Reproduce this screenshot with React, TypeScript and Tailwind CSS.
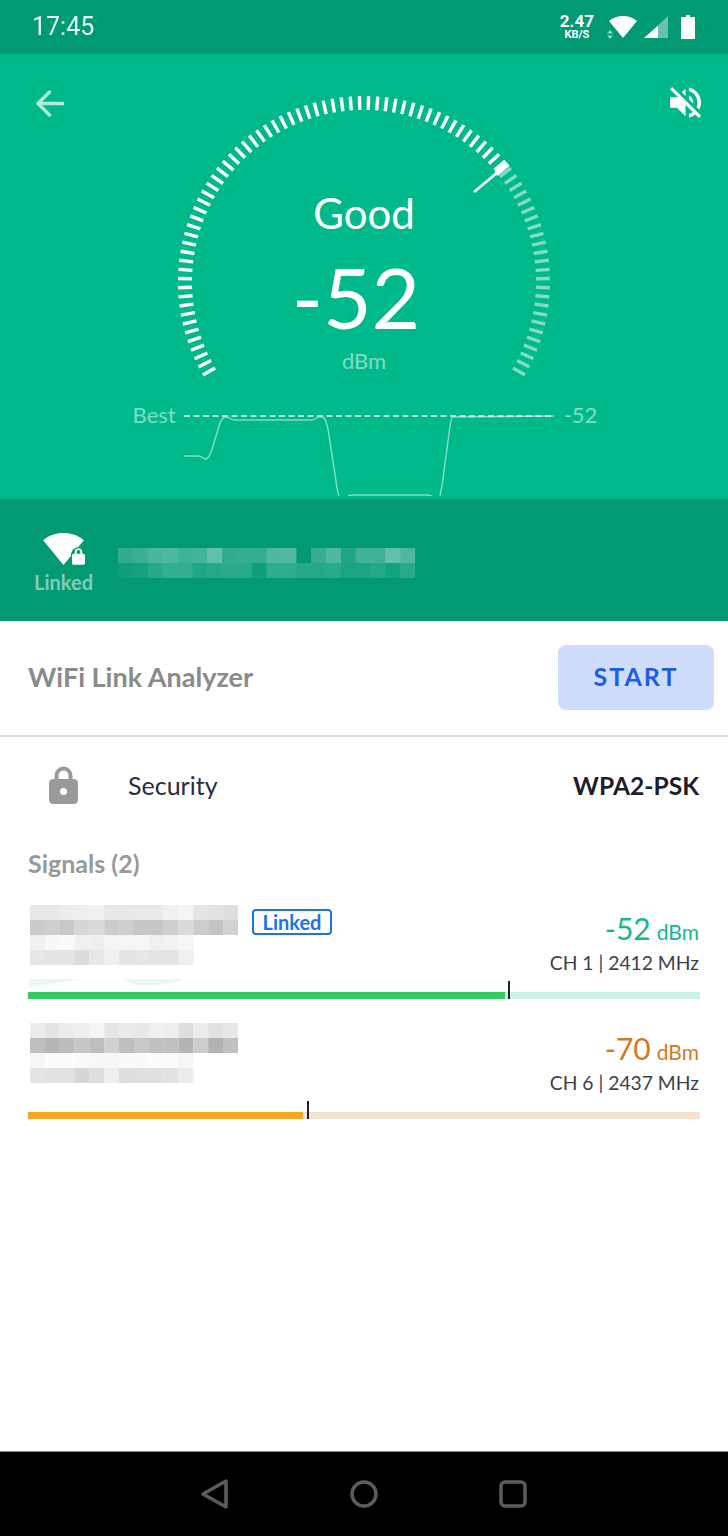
import React from 'react'

const ticks = Array.from({ length: 86 }, (_, i) => -120 + (i * 240) / 85)

const Gauge: React.FC = () => {
  const cx = 364
  const cy = 282
  return (
    <svg className="absolute left-[174px] top-[36px] w-[380px] h-[300px]" viewBox="174 90 380 300">
      {ticks.map((a, i) => {
        const r = (a * Math.PI) / 180
        const s = Math.sin(r)
        const c = Math.cos(r)
        return (
          <line
            key={i}
            x1={cx + 172 * s}
            y1={cy - 172 * c}
            x2={cx + 186 * s}
            y2={cy - 186 * c}
            stroke="#fff"
            strokeOpacity={a > 51 ? 0.5 : 1}
            strokeWidth={3.4}
          />
        )
      })}
      <line x1="474" y1="192" x2="498" y2="172" stroke="#fff" strokeWidth="2.5" />
      <line x1="496" y1="174" x2="508" y2="164" stroke="#fff" strokeWidth="5" />
    </svg>
  )
}

const Chart: React.FC = () => (
  <svg className="w-[372px] h-[85px] mt-[9px] shrink-0" viewBox="183 410 372 85">
    <path
      d="M183 455 L197 455 C201 455 203 458 205 458 C208 458 210 452 212 445 L219 422 C221 417 223 416 225 416 C228 416 230 419 234 419 L311 419 C314 419 315 416 318 416 L321 416 C324 416 325 420 327 428 L335 480 C336 488 337 492 338 495 M347 495 C348 494 350 494 353 494 L425 494 C428 494 429 494 431 495 M439 495 C441 486 442 480 443 470 L449 425 C450 418 451 416 452 416 L553 415"
      fill="none"
      stroke="#fff"
      strokeOpacity="0.5"
      strokeWidth="1.5"
    />
    <line x1="183" y1="415" x2="553" y2="415" stroke="#fff" strokeOpacity="0.9" strokeWidth="1.5" strokeDasharray="6 3.5" />
  </svg>
)

const WifiWedge: React.FC<{ className: string }> = ({ className }) => (
  <svg className={className} viewBox="0 0 42 33" fill="#fff">
    <path d="M0 7.5 C6 2.5 13 0 21 0 C29 0 36 2.5 42 7.5 L21 33 Z" />
  </svg>
)

// censored text in the picture, one grey value per block
const Pixels: React.FC<{ rows: string[][]; className: string; w: number; h: number }> = ({ rows, className, w, h }) => (
  <svg className={className} viewBox={`0 0 ${w} ${h}`}>
    {rows.map((row, y) =>
      row.map((fill, x) =>
        fill ? <rect key={`${x}-${y}`} x={x * 14.85} y={y * 15} width={15} height={15} fill={fill} /> : null,
      ),
    )}
  </svg>
)

const toWhite = (list: number[]) => list.map((v) => (v ? `rgba(255,255,255,${v})` : ''))
const toGrey = (list: number[]) => list.map((v) => (v ? `rgb(${v},${v},${v + 2})` : ''))

const linkedName = [
  toWhite([0.18, 0.22, 0.28, 0.3, 0.24, 0.26, 0.38, 0.18, 0.2, 0.2, 0.3, 0.32, 0, 0.2, 0.3, 0.12, 0.25, 0.25, 0.38, 0.3]),
  toWhite([0.05, 0.08, 0.15, 0.2, 0.2, 0.12, 0.15, 0.16, 0.16, 0.06, 0.18, 0.18, 0.14, 0.14, 0.16, 0.1, 0.1, 0.14, 0.08, 0.16]),
]

const nameOne = [
  toGrey([232, 232, 236, 238, 240, 232, 232, 234, 234, 240, 244, 228, 226, 222]),
  toGrey([202, 206, 200, 214, 218, 204, 206, 198, 198, 206, 218, 204, 196, 210]),
  toGrey([240, 248, 250, 240, 238, 244, 246, 246, 240, 242, 246]),
  toGrey([230, 228, 228, 220, 232, 240, 228, 230, 228, 228, 240]),
]

const nameTwo = [
  toGrey([236, 228, 236, 238, 244, 230, 234, 232, 240, 238, 222, 236, 226, 230]),
  toGrey([190, 182, 188, 198, 190, 208, 190, 200, 192, 192, 180, 204, 178, 192]),
  toGrey([246, 252, 252, 250, 248, 246, 250, 250, 252, 252, 246]),
  toGrey([228, 226, 226, 214, 222, 238, 222, 224, 224, 226, 236]),
]

interface SignalRowProps {
  rows: string[][]
  pixelClass: string
  linked?: boolean
  value: string
  valueClass: string
  channel: string
  trackClass: string
  fillClass: string
  markerClass: string
  children?: React.ReactNode
}

const SignalRow: React.FC<SignalRowProps> = ({ rows, pixelClass, linked, value, valueClass, channel, trackClass, fillClass, markerClass, children }) => (
  <div className="relative">
    <div className="flex justify-between h-[87px]">
      <div className="flex items-start pl-[2px]">
        <Pixels rows={rows} className={`w-[208px] h-[60px] blur-[0.6px] ${pixelClass}`} w={208} h={60} />
        {linked && (
          <span className="ml-[14px] mt-[4px] h-[26px] w-[80px] flex items-center justify-center border-2 border-[#1a73e8] rounded-[4px] text-[20px] font-bold text-[#1a73e8]">
            Linked
          </span>
        )}
      </div>
      <div className="flex flex-col items-end pr-[1px]">
        <div className={`h-[46px] flex items-baseline gap-[6px] ${valueClass}`}>
          <span className="text-[30px] leading-[46px]">{value}</span>
          <span className="text-[21px] leading-[46px]">dBm</span>
        </div>
        <span className="text-[19.3px] leading-[24px] text-[#3c404c]">{channel}</span>
      </div>
    </div>
    {children}
    <div className={`relative h-[7px] ${trackClass}`}>
      <div className={`h-full ${fillClass}`} />
      <div className={`absolute bottom-0 h-[18px] w-[2px] bg-[#1d2430] ${markerClass}`} />
    </div>
  </div>
)

const App: React.FC = () => {
  return (
    <div className="w-[728px] h-[1536px] flex flex-col bg-white font-['Lato',sans-serif] overflow-hidden">
      {/* status bar */}
      <div className="h-[54px] bg-[#019a73] flex items-center justify-between pl-[32px] pr-[33px] text-white">
        <span className="font-['Roboto',sans-serif] text-[25px] opacity-90">17:45</span>
        <div className="flex items-center">
          <div className="flex flex-col items-center font-['Roboto',sans-serif] font-bold mr-[13px] mt-[-1px]">
            <span className="text-[17px] leading-[15px]">2.47</span>
            <span className="text-[11px] leading-[11px]">KB/S</span>
          </div>
          <div className="relative">
            <WifiWedge className="w-[32px] h-[22px]" />
            <svg className="absolute left-[0px] top-[14px] w-[6px] h-[9px]" viewBox="0 0 6 9" fill="#fff" fillOpacity="0.6">
              <path d="M3 0 L6 3.500 H0 Z M0 5.500 H6 L3 9 Z" />
            </svg>
          </div>
          <svg className="w-[24px] h-[22px] ml-[5px]" viewBox="0 0 24 22">
            <path d="M24 0 V22 H0 Z" fill="#fff" fillOpacity="0.4" />
            <path d="M14 10 V22 H0 Z" fill="#fff" />
          </svg>
          <svg className="w-[14px] h-[24px] ml-[13px]" viewBox="0 0 14 24" fill="#fff">
            <path d="M5 0 H9 V2 H13 C13.600 2 14 2.400 14 3 V23 C14 23.600 13.600 24 13 24 H1 C.4 24 0 23.600 0 23 V3 C0 2.400 .4 2 1 2 H5 Z" />
          </svg>
        </div>
      </div>

      {/* gauge panel */}
      <div className="relative h-[445px] bg-[#00b98a] flex flex-col items-center text-white">
        <svg className="absolute left-[36px] top-[36px] w-[28px] h-[27px] opacity-70" viewBox="0 0 28 27" fill="none" stroke="#fff" strokeWidth="3.400" strokeLinecap="round" strokeLinejoin="round">
          <path d="M27 13.500 H2 M13.500 2 L2 13.500 L13.500 25" />
        </svg>
        <svg className="absolute left-[669px] top-[33px] w-[33px] h-[31px]" viewBox="3 3 18 18" fill="#fff">
          <path d="M16.5 12c0-1.77-1.02-3.29-2.5-4.03v2.21l2.45 2.45c.03-.2.05-.41.05-.63zm2.5 0c0 .94-.2 1.82-.54 2.64l1.51 1.51C20.63 14.91 21 13.5 21 12c0-4.28-2.99-7.86-7-8.77v2.06c2.89.86 5 3.54 5 6.71zM4.27 3L3 4.27 7.73 9H3v6h4l5 5v-6.73l4.25 4.25c-.67.52-1.42.93-2.25 1.18v2.06c1.38-.31 2.63-.95 3.69-1.81L19.73 21 21 19.73l-9-9L4.27 3zM12 4L9.91 6.09 12 8.18V4z" />
        </svg>
        <Gauge />
        <span className="relative mt-[134px] text-[42px] leading-[50px] font-normal">Good</span>
        <span className="relative mt-[19px] mr-[16px] text-[84px] leading-[80px] font-normal">-52</span>
        <span className="relative mt-[11px] text-[22px] leading-[26px] text-white/50">dBm</span>
        <div className="relative mt-[28px] ml-[2px] flex items-start gap-[8px] text-[22px] leading-[26px] text-white/50">
          <span>Best</span>
          <Chart />
          <span>-52</span>
        </div>
      </div>

      {/* linked network */}
      <div className="h-[122px] bg-[#019a73] flex items-center pl-[35px]">
        <div className="relative flex flex-col items-center w-[57px] mt-[7px]">
          <WifiWedge className="w-[41px] h-[32px]" />
          <svg className="absolute left-[36px] top-[14px] w-[15px] h-[19px] bg-[#019a73] rounded-tl-[8px] p-[1px]" viewBox="0 0 14 18" fill="#fff">
            <path d="M12 6h-1V4a4 4 0 0 0-8 0v2H2C.9 6 0 6.900 0 8v8c0 1.100.9 2 2 2h10c1.100 0 2-.9 2-2V8c0-1.100-.9-2-2-2zM5 6V4a2 2 0 0 1 4 0v2H5z" />
          </svg>
          <span className="text-[20px] leading-[24px] font-bold text-white/50 mt-[5px]">Linked</span>
        </div>
        <Pixels rows={linkedName} className="ml-[26px] mt-[6px] w-[298px] h-[30px] blur-[0.6px]" w={298} h={30} />
      </div>

      {/* analyzer */}
      <div className="h-[116px] border-b-2 border-[#d9d9e0] flex items-center justify-between pl-[28px] pr-[14px]">
        <span className="text-[27px] font-bold text-[#8a8a8a] mt-[-2px]">WiFi Link Analyzer</span>
        <button className="w-[156px] h-[65px] mt-[-2px] rounded-[8px] bg-[#cfddfb] text-[25px] font-bold tracking-[2px] text-[#1a5ee8]">START</button>
      </div>

      {/* security */}
      <div className="h-[100px] flex items-center justify-between pl-[49px] pr-[29px] pb-[2px]">
        <div className="flex items-center">
          <svg className="w-[29px] h-[38px] mt-[-2px]" viewBox="0 0 29 38" fill="#999">
            <path d="M25 13h-1.500V9.500a9 9 0 0 0-18 0V13H4c-2.200 0-4 1.800-4 4v17c0 2.200 1.800 4 4 4h21c2.200 0 4-1.800 4-4V17c0-2.200-1.800-4-4-4zM14.500 29a3.500 3.500 0 1 1 0-7 3.500 3.500 0 0 1 0 7zM19.500 13h-10V9.500a5 5 0 0 1 10 0V13z" />
          </svg>
          <span className="ml-[50px] text-[25px] text-[#2b2d3a]">Security</span>
        </div>
        <span className="text-[24.6px] font-bold text-[#1d1d2b]">WPA2-PSK</span>
      </div>

      {/* signals */}
      <div className="flex-1 px-[28px]">
        <h2 className="text-[25px] leading-[28px] font-bold text-[#999999] mt-[12px] mb-[28px]">Signals (2)</h2>
        <div className="flex flex-col gap-[26px]">
          <SignalRow
            rows={nameOne}
            pixelClass="mt-0"
            linked
            value="-52"
            valueClass="text-[#12b98e]"
            channel="CH 1 | 2412 MHz"
            trackClass="bg-[#ccf1e6]"
            fillClass="w-[477px] bg-[#36cc62]"
            markerClass="left-[480px]"
          >
            <svg className="absolute left-[1px] top-[74px] w-[155px] h-[8px]" viewBox="0 0 155 8" fill="#e6f8ef">
              <path d="M0 0 H55 L20 5 L0 8 Z M95 0 H155 C145 4 130 6 115 6 C105 6 100 3 95 0 Z" />
            </svg>
          </SignalRow>
          <SignalRow
            rows={nameTwo}
            pixelClass="mt-[-2px]"
            value="-70"
            valueClass="text-[#d2791f]"
            channel="CH 6 | 2437 MHz"
            trackClass="bg-[#f5e2cf]"
            fillClass="w-[275px] bg-[#f5a623]"
            markerClass="left-[279px]"
          />
        </div>
      </div>

      {/* nav bar */}
      <div className="h-[85px] bg-black border-t border-[#8a8a8a] flex items-center justify-center gap-[121px]">
        <svg className="w-[28px] h-[30px]" viewBox="0 0 28 30" fill="none" stroke="#5c5c5c" strokeWidth="3.500" strokeLinejoin="round">
          <path d="M25 2 V28 L2 15 Z" />
        </svg>
        <svg className="w-[28px] h-[28px]" viewBox="0 0 28 28" fill="none" stroke="#5c5c5c" strokeWidth="3.500">
          <circle cx="14" cy="14" r="12" />
        </svg>
        <svg className="w-[28px] h-[28px]" viewBox="0 0 28 28" fill="none" stroke="#5c5c5c" strokeWidth="3.500">
          <rect x="2" y="2" width="24" height="24" rx="4" />
        </svg>
      </div>
    </div>
  )
}

export default App
